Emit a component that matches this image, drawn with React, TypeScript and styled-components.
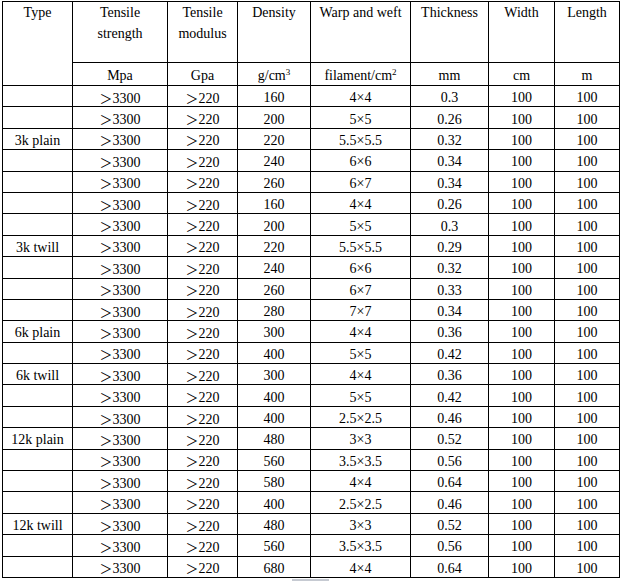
import styled, { createGlobalStyle } from 'styled-components';

const GlobalStyle = createGlobalStyle`
  html, body {
    margin: 0;
    padding: 0;
    background: #ffffff;
  }
  body {
    font-family: "Liberation Serif", "Times New Roman", serif;
    color: #000000;
  }
`;

const Wrapper = styled.div`
  display: flex;
  flex-direction: column;
  align-items: flex-start;
  padding: 1px 0 0 2px;
`;

const Table = styled.table`
  width: 617px;
  table-layout: fixed;
  border-collapse: collapse;

  td,
  th {
    border: 1px solid #000;
    padding: 0;
    text-align: center;
    font-family: "Liberation Serif", "Times New Roman", serif;
    font-size: 14px;
    font-weight: normal;
    color: #000;
    white-space: nowrap;
    overflow: hidden;
  }
`;

const HeadRow = styled.tr`
  height: 61px;
`;

const UnitRow = styled.tr`
  height: 23px;
`;

const DataRow = styled.tr`
  height: 21.4px;
`;

const HeadCell = styled.th`
  vertical-align: top;
  line-height: 21px;
  padding-top: 0 !important;
`;

const UnitCell = styled.td`
  vertical-align: middle;
  line-height: 16px;
  padding-top: 3px !important;
`;

const Cell = styled.td`
  vertical-align: middle;
  line-height: 15px;
  padding-top: 3px !important;
`;

const Gt = styled.span`
  font-family: "Noto Sans CJK SC", sans-serif;
  font-size: 13px;
`;

const Sup = styled.sup`
  font-size: 9px;
  line-height: 0;
  vertical-align: 5px;
`;

const ScrollHint = styled.div`
  width: 37px;
  height: 3px;
  margin-left: 290px;
  margin-top: 1px;
  background: #c6cad2;
`;

const columns = [70, 95, 70, 73, 100, 78, 66, 65];

const rows: [string, string, string][] = [
  ['160', '4×4', '0.3'],
  ['200', '5×5', '0.26'],
  ['220', '5.5×5.5', '0.32'],
  ['240', '6×6', '0.34'],
  ['260', '6×7', '0.34'],
  ['160', '4×4', '0.26'],
  ['200', '5×5', '0.3'],
  ['220', '5.5×5.5', '0.29'],
  ['240', '6×6', '0.32'],
  ['260', '6×7', '0.33'],
  ['280', '7×7', '0.34'],
  ['300', '4×4', '0.36'],
  ['400', '5×5', '0.42'],
  ['300', '4×4', '0.36'],
  ['400', '5×5', '0.42'],
  ['400', '2.5×2.5', '0.46'],
  ['480', '3×3', '0.52'],
  ['560', '3.5×3.5', '0.56'],
  ['580', '4×4', '0.64'],
  ['400', '2.5×2.5', '0.46'],
  ['480', '3×3', '0.52'],
  ['560', '3.5×3.5', '0.56'],
  ['680', '4×4', '0.64'],
];

// ラベルは各グループの中央の行だけに入る
const typeLabels: Record<number, string> = {
  2: '3k plain',
  7: '3k twill',
  11: '6k plain',
  13: '6k twill',
  16: '12k plain',
  20: '12k twill',
};

export default function App() {
  return (
    <>
      <GlobalStyle />
      <Wrapper>
        <Table>
          <colgroup>
            {columns.map((w, i) => (
              <col key={i} style={{ width: w }} />
            ))}
          </colgroup>
          <thead>
            <HeadRow>
              <HeadCell rowSpan={2}>Type</HeadCell>
              <HeadCell>
                Tensile
                <br />
                strength
              </HeadCell>
              <HeadCell>
                Tensile
                <br />
                modulus
              </HeadCell>
              <HeadCell>Density</HeadCell>
              <HeadCell>Warp and weft</HeadCell>
              <HeadCell>Thickness</HeadCell>
              <HeadCell>Width</HeadCell>
              <HeadCell>Length</HeadCell>
            </HeadRow>
            <UnitRow>
              <UnitCell>Mpa</UnitCell>
              <UnitCell>Gpa</UnitCell>
              <UnitCell>
                g/cm<Sup>3</Sup>
              </UnitCell>
              <UnitCell>
                filament/cm<Sup>2</Sup>
              </UnitCell>
              <UnitCell>mm</UnitCell>
              <UnitCell>cm</UnitCell>
              <UnitCell>m</UnitCell>
            </UnitRow>
          </thead>
          <tbody>
            {rows.map(([density, warp, thickness], i) => (
              <DataRow key={i}>
                <Cell>{typeLabels[i] ?? ''}</Cell>
                <Cell>
                  <Gt>＞</Gt>3300
                </Cell>
                <Cell>
                  <Gt>＞</Gt>220
                </Cell>
                <Cell>{density}</Cell>
                <Cell>{warp}</Cell>
                <Cell>{thickness}</Cell>
                <Cell>100</Cell>
                <Cell>100</Cell>
              </DataRow>
            ))}
          </tbody>
        </Table>
        <ScrollHint />
      </Wrapper>
    </>
  );
}
